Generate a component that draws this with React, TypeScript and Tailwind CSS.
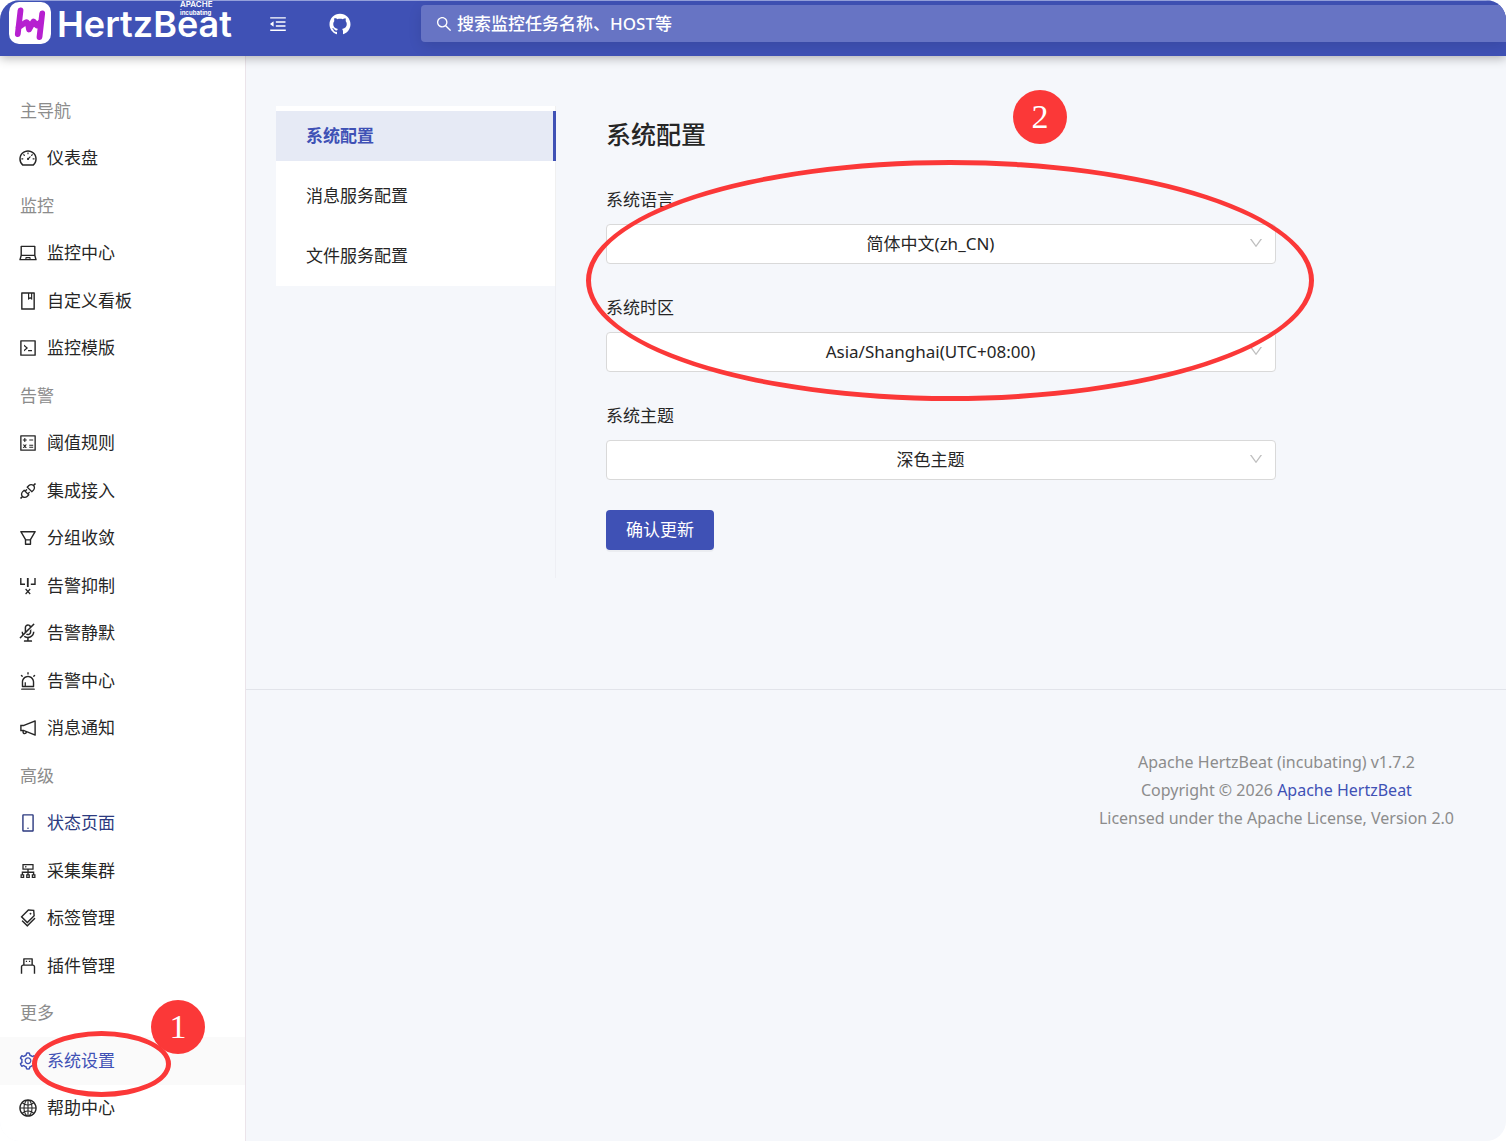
import { useState } from 'react'
import type { IconType } from 'react-icons'
import {
  AiFillGithub,
  AiOutlineAlert,
  AiOutlineApi,
  AiOutlineAudioMuted,
  AiOutlineBook,
  AiOutlineCalculator,
  AiOutlineCluster,
  AiOutlineCode,
  AiOutlineDashboard,
  AiOutlineDown,
  AiOutlineFilter,
  AiOutlineGlobal,
  AiOutlineLaptop,
  AiOutlineMenuFold,
  AiOutlineMobile,
  AiOutlineNotification,
  AiOutlineSearch,
  AiOutlineSetting,
  AiOutlineTags,
  AiOutlineUsb,
} from 'react-icons/ai'
import { clsx } from 'clsx'

// not part of the ant set
function InhibitIcon({ className }: { className?: string }) {
  return (
    <svg viewBox="0 0 20 20" fill="none" stroke="currentColor" strokeWidth="1.4" className={className}>
      <path d="M2.800 2v6.300h4.200M17 2v6.300h-4.200" />
      <path d="M9.800 2v9" strokeWidth="1.800" />
      <path d="M7.600 13l4.600 5M12.200 13l-4.600 5" strokeWidth="1.200" />
    </svg>
  )
}

interface NavItem {
  label: string
  icon: IconType | typeof InhibitIcon
  tone?: 'visited' | 'active'
}

const navGroups: { title: string; items: NavItem[] }[] = [
  { title: '主导航', items: [{ label: '仪表盘', icon: AiOutlineDashboard }] },
  {
    title: '监控',
    items: [
      { label: '监控中心', icon: AiOutlineLaptop },
      { label: '自定义看板', icon: AiOutlineBook },
      { label: '监控模版', icon: AiOutlineCode },
    ],
  },
  {
    title: '告警',
    items: [
      { label: '阈值规则', icon: AiOutlineCalculator },
      { label: '集成接入', icon: AiOutlineApi },
      { label: '分组收敛', icon: AiOutlineFilter },
      { label: '告警抑制', icon: InhibitIcon },
      { label: '告警静默', icon: AiOutlineAudioMuted },
      { label: '告警中心', icon: AiOutlineAlert },
      { label: '消息通知', icon: AiOutlineNotification },
    ],
  },
  {
    title: '高级',
    items: [
      { label: '状态页面', icon: AiOutlineMobile, tone: 'visited' },
      { label: '采集集群', icon: AiOutlineCluster },
      { label: '标签管理', icon: AiOutlineTags },
      { label: '插件管理', icon: AiOutlineUsb },
    ],
  },
  {
    title: '更多',
    items: [
      { label: '系统设置', icon: AiOutlineSetting, tone: 'active' },
      { label: '帮助中心', icon: AiOutlineGlobal },
    ],
  },
]

const tabs = ['系统配置', '消息服务配置', '文件服务配置']

const fields = [
  { id: 'locale', label: '系统语言', options: ['简体中文(zh_CN)'] },
  { id: 'timezone', label: '系统时区', options: ['Asia/Shanghai(UTC+08:00)'] },
  { id: 'theme', label: '系统主题', options: ['深色主题'] },
]

function Logo() {
  return (
    <a href="#" className="relative flex h-full w-[233px] shrink-0 items-start pl-2 text-white">
      <svg viewBox="0 0 44 44" className="mt-px h-11 w-11">
        <rect x="1" y="0" width="42" height="42" rx="10" fill="#fff" />
        <path
          d="M12.500 8.500L9.800 32M10.500 25.500L17.500 20.500Q19.500 19.500 20 22L21 27.500L25.500 19.500L29 23.500L33 19.500M34.200 11.500L31.500 35"
          fill="none"
          stroke="#b620d0"
          strokeWidth="5.800"
          strokeLinecap="round"
          strokeLinejoin="round"
        />
      </svg>
      <span className="ml-[5px] font-[Inter,sans-serif] text-4xl leading-[46px] font-semibold">HertzBeat</span>
      <span className="absolute top-0 left-[180px] font-[Inter,sans-serif] text-[8px] leading-[7px] font-semibold">APACHE</span>
      <span className="absolute top-2 left-[180px] font-[Inter,sans-serif] text-[6px] leading-[8px] font-bold">incubating</span>
    </a>
  )
}

function Header() {
  return (
    <header className="relative z-10 flex h-14 items-start border-t border-[#94a0da] bg-[#3f51b5] shadow-[0_2px_10px_rgba(0,0,0,0.3)]">
      <Logo />
      <button type="button" aria-label="收起菜单" className="mt-[13px] ml-[35px] text-white">
        <AiOutlineMenuFold className="h-5 w-5" />
      </button>
      <a href="#" aria-label="GitHub" className="mt-[11px] ml-10 text-white">
        <AiFillGithub className="h-6 w-6" />
      </a>
      <label className="mt-1 ml-[69px] flex h-[37px] flex-1 items-center rounded-l bg-[#6774c4] pl-3.5 text-white shadow-[0_4px_14px_rgba(0,0,0,0.1)]">
        <AiOutlineSearch className="h-[18px] w-[18px]" />
        <input
          type="text"
          aria-label="搜索"
          placeholder="搜索监控任务名称、HOST等"
          className="ml-1 min-w-0 flex-1 bg-transparent text-[17px] font-medium outline-none placeholder:text-white"
        />
      </label>
    </header>
  )
}

function Sidebar() {
  return (
    <aside className="relative flex w-[246px] shrink-0 flex-col border-r border-[#ebe4ea] bg-white">
      <nav className="flex flex-1 flex-col pt-[31px] pb-[9px]">
        {navGroups.flatMap((group) => [
          <div key={group.title} className="flex min-h-9 flex-1 items-center pl-5 text-[#8c8c8c]">
            {group.title}
          </div>,
          ...group.items.map(({ label, icon: Icon, tone }) => (
            <a
              key={label}
              href="#"
              className={clsx(
                'relative flex min-h-9 flex-1 items-center gap-[9px] pl-[18px]',
                tone === 'active' && 'bg-[#fafafa] text-[#3f51b5]',
                tone === 'visited' && 'text-[#2c3a80]',
              )}
            >
              <Icon className="h-5 w-5" />
              {label}
              {tone === 'active' && (
                <>
                  <span className="absolute -top-1.5 left-8 h-[66px] w-[139px] rounded-[50%] border-[5px] border-[#fb3838]" />
                  <StepBadge step={1} className="bottom-[31px] left-[151px]" />
                </>
              )}
            </a>
          )),
        ])}
      </nav>
    </aside>
  )
}

function StepBadge({ step, className }: { step: number; className: string }) {
  return (
    <span
      className={clsx(
        'absolute flex h-[54px] w-[54px] items-center justify-center rounded-full bg-[#fb3838] font-["Liberation_Serif",serif] text-[34px] leading-none text-white',
        className,
      )}
    >
      {step}
    </span>
  )
}

function SettingsTabs() {
  const [current, setCurrent] = useState(tabs[0])

  return (
    <div className="min-h-[472px] w-[280px] shrink-0 border-r border-[#eeeff4]">
      <div className="-mr-px flex flex-col gap-2.5 border-r border-[#f0f0f0] bg-white py-[5px]">
        {tabs.map((tab) => (
          <button
            key={tab}
            type="button"
            onClick={() => setCurrent(tab)}
            className={clsx(
              '-mr-px h-[50px] pl-[30px] text-left',
              tab === current && 'border-r-3 border-[#3f51b5] bg-[#e6eaf5] font-bold text-[#3f51b5]',
            )}
          >
            {tab}
          </button>
        ))}
      </div>
    </div>
  )
}

function SystemForm() {
  return (
    <form className="relative ml-[50px] w-full max-w-[670px] pt-2.5" onSubmit={(e) => e.preventDefault()}>
      <h1 className="text-[25px] leading-9 font-medium">系统配置</h1>
      <div className="mt-7 flex flex-col gap-6">
        {fields.map((field) => (
          <div key={field.id}>
            <label htmlFor={field.id} className="mb-1 block h-10 leading-10">
              {field.label}
            </label>
            <div className="relative">
              <select
                id={field.id}
                className="block h-10 w-full appearance-none rounded border border-[#d9d9d9] bg-white pr-[35px] pl-3.5 text-center outline-none"
              >
                {field.options.map((option) => (
                  <option key={option}>{option}</option>
                ))}
              </select>
              <AiOutlineDown className="pointer-events-none absolute top-[11px] right-3 h-4 w-4 text-[#bfbfbf]" />
            </div>
          </div>
        ))}
      </div>
      <button type="submit" className="mt-[30px] h-10 rounded bg-[#3f51b5] px-5 text-white shadow-[0_2px_0_rgba(0,0,0,0.04)]">
        确认更新
      </button>
      <span className="pointer-events-none absolute top-[54px] -left-5 h-[241px] w-[728px] rounded-[50%] border-[5px] border-[#fb3838]" />
      <StepBadge step={2} className="-top-4 left-[407px]" />
    </form>
  )
}

export default function App() {
  return (
    <div className="min-h-screen bg-white">
      <div className='flex min-h-screen flex-col overflow-hidden rounded-[20px] bg-[#f5f7fb] font-["Noto_Sans","Noto_Sans_CJK_SC",sans-serif] text-[17px] leading-7 text-[#262626]'>
        <Header />
        <div className="flex flex-1">
          <Sidebar />
          <main className="min-w-0 flex-1">
            <div className="flex min-h-[633px] items-start px-[30px] pt-[50px]">
              <SettingsTabs />
              <SystemForm />
            </div>
            <footer className="flex justify-end border-t border-[#e2e4ea] pt-[58px] pr-[52px]">
              <div className="text-center text-base leading-7 text-[#8c8c8c]">
                <p>Apache HertzBeat (incubating) v1.7.2</p>
                <p>
                  Copyright © 2026{' '}
                  <a href="#" className="text-[#3f51b5]">
                    Apache HertzBeat
                  </a>
                </p>
                <p>Licensed under the Apache License, Version 2.0</p>
              </div>
            </footer>
          </main>
        </div>
      </div>
    </div>
  )
}
